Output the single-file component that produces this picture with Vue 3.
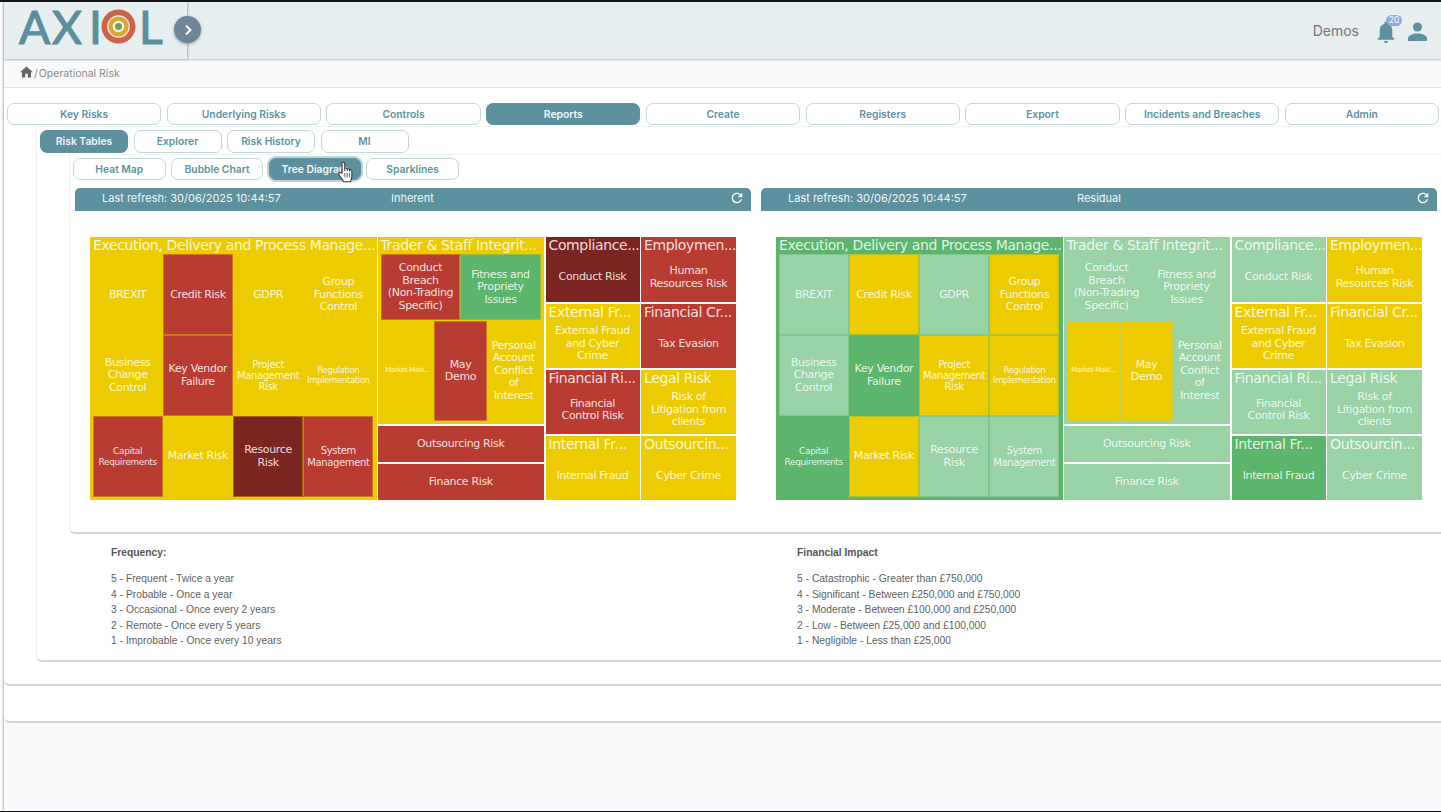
<script setup>
const mainTabs = ['Key Risks', 'Underlying Risks', 'Controls', 'Reports', 'Create', 'Registers', 'Export', 'Incidents and Breaches', 'Admin']
const subTabs = ['Risk Tables', 'Explorer', 'Risk History', 'MI']
const viewTabs = ['Heat Map', 'Bubble Chart', 'Tree Diagram', 'Sparklines']

const C = { r: '#b93c32', d: '#7b2521', y: '#eccc00', g: '#5cb56b', l: '#98d2a5' }

// x, y, w, h relative to the tree map; a = inherent colour, b = residual colour
const groups = [
  { t: 'Execution, Delivery and Process Manage...', x: 0, y: 0, w: 287, h: 263, a: 'y', b: 'g' },
  { t: 'Trader & Staff Integrit...', x: 287.5, y: 0, w: 166.5, h: 187, a: 'y', b: 'l' },
  { t: '', x: 287.5, y: 188.5, w: 166.5, h: 36, a: 'r', b: 'l', leaf: 'Outsourcing Risk' },
  { t: '', x: 287.5, y: 226.5, w: 166.5, h: 36.5, a: 'r', b: 'l', leaf: 'Finance Risk' },
  { t: 'Compliance...', x: 455.5, y: 0, w: 94, h: 65, a: 'd', b: 'l', leaf: 'Conduct Risk' },
  { t: 'Employmen...', x: 551, y: 0, w: 95, h: 65, a: 'r', b: 'y', leaf: 'Human\nResources Risk' },
  { t: 'External Fr...', x: 455.5, y: 66.5, w: 94, h: 64.5, a: 'y', b: 'y', leaf: 'External Fraud\nand Cyber\nCrime' },
  { t: 'Financial Cr...', x: 551, y: 66.5, w: 95, h: 64.5, a: 'r', b: 'y', leaf: 'Tax Evasion' },
  { t: 'Financial Ri...', x: 455.5, y: 132.5, w: 94, h: 64.5, a: 'r', b: 'l', leaf: 'Financial\nControl Risk' },
  { t: 'Legal Risk', x: 551, y: 132.5, w: 95, h: 64.5, a: 'y', b: 'l', leaf: 'Risk of\nLitigation from\nclients' },
  { t: 'Internal Fr...', x: 455.5, y: 198.5, w: 94, h: 64.5, a: 'y', b: 'g', leaf: 'Internal Fraud' },
  { t: 'Outsourcin...', x: 551, y: 198.5, w: 95, h: 64.5, a: 'y', b: 'l', leaf: 'Cyber Crime' }
]

const cols = [2.5, 72.8, 143, 213.2, 283.5]
const rows = [17.3, 98.3, 179, 260.3]
const cell = (c, r, label, a, b, fs = 11) => ({
  label, a, b, fs, pa: 'y', pb: 'g',
  x: cols[c], y: rows[r], w: cols[c + 1] - cols[c], h: rows[r + 1] - rows[r]
})
const leaves = [
  cell(0, 0, 'BREXIT', 'y', 'l'),
  cell(1, 0, 'Credit Risk', 'r', 'y'),
  cell(2, 0, 'GDPR', 'y', 'l'),
  cell(3, 0, 'Group\nFunctions\nControl', 'y', 'y'),
  cell(0, 1, 'Business\nChange\nControl', 'y', 'l'),
  cell(1, 1, 'Key Vendor\nFailure', 'r', 'g'),
  cell(2, 1, 'Project\nManagement\nRisk', 'y', 'y', 10),
  cell(3, 1, 'Regulation\nImplementation', 'y', 'y', 8.5),
  cell(0, 2, 'Capital\nRequirements', 'r', 'g', 9),
  cell(1, 2, 'Market Risk', 'y', 'y'),
  cell(2, 2, 'Resource\nRisk', 'd', 'l'),
  cell(3, 2, 'System\nManagement', 'r', 'l', 10),
  { label: 'Conduct\nBreach\n(Non-Trading\nSpecific)', x: 290.7, y: 17.3, w: 79.6, h: 66, a: 'r', b: 'l', fs: 11, pa: 'y', pb: 'l' },
  { label: 'Fitness and\nPropriety\nIssues', x: 370.3, y: 17.3, w: 80.4, h: 66, a: 'g', b: 'l', fs: 11, pa: 'y', pb: 'l' },
  { label: 'Market-Maki...', x: 290.7, y: 84, w: 53.6, h: 100, a: 'y', b: 'y', fs: 7, pa: 'y', pb: 'l' },
  { label: 'May\nDemo', x: 344.3, y: 84, w: 52.4, h: 100, a: 'r', b: 'y', fs: 11, pa: 'y', pb: 'l' },
  { label: 'Personal\nAccount\nConflict\nof\nInterest', x: 396.7, y: 84, w: 54, h: 100, a: 'y', b: 'l', fs: 11, pa: 'y', pb: 'l' }
]

const panels = [
  { name: 'Inherent', key: 'a', parent: 'pa' },
  { name: 'Residual', key: 'b', parent: 'pb' }
]
const box = (n) => ({ left: n.x + 'px', top: n.y + 'px', width: n.w + 'px', height: n.h + 'px' })
const nodeStyle = (n, p) => ({ ...box(n), background: C[n[p.key]] })
const leafStyle = (n, p) => ({
  ...box(n),
  background: C[n[p.key]],
  fontSize: n.fs + 'px',
  lineHeight: n.fs * 1.13 + 'px',
  boxShadow: `inset 0 0 0 1px ${C[n[p.parent]]}66`
})

const frequency = [
  '5 - Frequent - Twice a year',
  '4 - Probable - Once a year',
  '3 - Occasional - Once every 2 years',
  '2 - Remote - Once every 5 years',
  '1 - Improbable - Once every 10 years'
]
const impact = [
  '5 - Catastrophic - Greater than £750,000',
  '4 - Significant - Between £250,000 and £750,000',
  '3 - Moderate - Between £100,000 and £250,000',
  '2 - Low - Between £25,000 and £100,000',
  '1 - Negligible - Less than £25,000'
]
</script>

<template>
  <div class="page">
    <div class="shell">
      <header class="topbar">
        <div class="brand">
          <div class="logo">
            <span class="l-a">A</span><span class="l-x">X</span><span class="l-i">I</span>
            <svg class="target" viewBox="0 0 36 36" width="35" height="35" aria-hidden="true">
              <circle cx="18" cy="18" r="17.500" fill="#cf6349" />
              <circle cx="18" cy="18" r="11.600" fill="#f1f1ea" />
              <circle cx="18" cy="18" r="10.400" fill="#d9a72f" />
              <circle cx="18" cy="18" r="6" fill="#f1f1ea" />
              <circle cx="18" cy="18" r="3.600" fill="#6f9f5e" />
            </svg>
            <span class="l-l">L</span>
          </div>
          <button class="toggle" aria-label="Expand">
            <svg viewBox="0 0 12 12" width="12" height="12"><path d="M4 1.600 8.400 6 4 10.400" fill="none" stroke="#fff" stroke-width="2" /></svg>
          </button>
        </div>
        <div class="user-tools">
          <span class="user-name">Demos</span>
          <span class="bell">
            <svg viewBox="3.500 2 17 21" width="18" height="22"><path fill="#5d919f" d="M12 23c1.100 0 2-.9 2-2h-4c0 1.100.9 2 2 2zm6-6v-6c0-3.070-1.630-5.640-4.500-6.320V4c0-.83-.67-1.500-1.500-1.500s-1.500.67-1.500 1.500v.68C7.640 5.360 6 7.920 6 11v6l-2 2v1h16v-1l-2-2z" /></svg>
            <span class="badge">20</span>
          </span>
          <svg class="user" viewBox="0 0 20 20" width="19" height="19"><circle cx="10" cy="5.200" r="4.800" fill="#5d919f" /><path fill="#5d919f" d="M0 20v-2.500c0-3.400 4.500-5.500 10-5.500s10 2.100 10 5.500V20z" /></svg>
        </div>
      </header>

      <nav class="crumb">
        <svg class="home" viewBox="2 3 20 17" width="13" height="12"><path fill="#666" d="M10 20v-6h4v6h5v-8h3L12 3 2 12h3v8z" /></svg>
        <span class="slash">/</span><span>Operational Risk</span>
      </nav>

      <main class="card-main">
        <div class="tabs main-tabs">
          <button v-for="t in mainTabs" :key="t" class="tab" :class="{ on: t === 'Reports' }">{{ t }}</button>
        </div>

        <section class="card-sub">
          <div class="tabs sub-tabs">
            <button v-for="t in subTabs" :key="t" class="tab" :class="{ on: t === 'Risk Tables' }">{{ t }}</button>
          </div>

          <section class="card-view">
            <div class="tabs view-tabs">
              <button v-for="t in viewTabs" :key="t" class="tab" :class="{ on: t === 'Tree Diagram', focus: t === 'Tree Diagram' }">{{ t }}</button>
              <svg class="hand" viewBox="0 0 16 20" width="18" height="22.500" aria-hidden="true">
                <path fill="#fff" stroke="#333" stroke-width=".9" stroke-linejoin="round" d="M4.500 10.500V2.300c0-1.600 2.400-1.600 2.400 0V8.500V7.200c0-1.400 2.200-1.400 2.200 0v1.500-.8c0-1.300 2.100-1.300 2.100 0v1.200-.4c0-1.200 2-1.200 2 0v4.800c0 2-.9 3.200-1.300 4.900H5.800c-.6-1.700-2-3-3.400-5.200-1-1.600-1.300-2.300-.8-2.800.6-.6 1.500-.2 2 .5z" />
                <path stroke="#333" stroke-width=".7" d="M7 10.500v4M9.100 10.500v4M11.200 10.500v4" />
              </svg>
            </div>

            <div class="panels">
              <article v-for="p in panels" :key="p.name" class="panel">
                <div class="panel-head">
                  <span class="refresh-time">Last refresh: 30/06/2025 10:44:57</span>
                  <span class="panel-name">{{ p.name }}</span>
                  <svg class="refresh" viewBox="3 3 18 18" width="12" height="12"><path fill="#fff" d="M17.650 6.350C16.200 4.900 14.210 4 12 4c-4.420 0-7.990 3.580-7.990 8s3.570 8 7.990 8c3.730 0 6.840-2.550 7.730-6h-2.080c-.82 2.330-3.040 4-5.650 4-3.310 0-6-2.690-6-6s2.690-6 6-6c1.660 0 3.140.69 4.220 1.780L13 11h7V4l-2.350 2.350z" /></svg>
                </div>
                <div class="treemap">
                  <div v-for="g in groups" :key="g.t + g.y + g.x" class="group" :style="nodeStyle(g, p)">
                    <div v-if="g.t" class="g-title">{{ g.t }}</div>
                    <div v-if="g.leaf" class="g-leaf" :class="{ full: !g.t }">{{ g.leaf }}</div>
                  </div>
                  <div v-for="n in leaves" :key="n.label" class="leaf" :style="leafStyle(n, p)">{{ n.label }}</div>
                </div>
              </article>
            </div>
          </section>

          <div class="legend">
            <div>
              <h4>Frequency:</h4>
              <p v-for="l in frequency" :key="l">{{ l }}</p>
            </div>
            <div>
              <h4>Financial Impact</h4>
              <p v-for="l in impact" :key="l">{{ l }}</p>
            </div>
          </div>
        </section>
      </main>

      <div class="card-foot"></div>
    </div>
  </div>
</template>

<style>
html, body { margin: 0; background: #fff; }
</style>

<style scoped>
.page {
  width: 1441px;
  height: 812px;
  box-sizing: border-box;
  overflow: hidden;
  display: flex;
  padding-left: 4px;
  border-top: 2px solid #14161a;
  border-bottom: 1px solid #14161a;
  background: #fdfdfd;
  font-family: Inter, "Liberation Sans", sans-serif;
}
.shell {
  flex: 1;
  min-width: 0;
  display: flex;
  flex-direction: column;
  background: #f8f9fb;
  box-shadow: -1px 0 2px rgba(0, 0, 0, .28);
}
.topbar {
  height: 57px;
  flex: none;
  display: flex;
  justify-content: space-between;
  align-items: center;
  background: #e6eef0;
  box-shadow: 0 1px 2px #bbb;
  position: relative;
  z-index: 2;
}
.brand {
  width: 183px;
  height: 100%;
  position: relative;
  box-shadow: 1px 0 2px #a9b0b2;
}
.logo {
  display: flex;
  align-items: center;
  box-sizing: border-box;
  height: 100%;
  padding: 0 0 8px 15px;
  color: #5b8f9e;
  font: 400 46px/1.200 Lato, sans-serif;
  -webkit-text-stroke: 1.200px #5b8f9e;
}
.logo span { display: block; flex: none; }
.l-a { width: 31px; }
.l-x { width: 29px; margin-left: 2px; }
.l-i { width: 8px; margin-left: 8px; }
.target { margin-left: 4px; flex: none; }
.l-l { width: 20px; margin-left: 3px; }
.toggle {
  position: absolute;
  right: -14px;
  top: 14px;
  width: 27px;
  height: 27px;
  padding: 0;
  border: 0;
  border-radius: 50%;
  background: #6e8798;
  box-shadow: 0 1px 3px rgba(0, 0, 0, .35);
  display: flex;
  align-items: center;
  justify-content: center;
}
.user-tools {
  display: flex;
  align-items: center;
  padding-right: 14px;
  color: #777;
  font-size: 14px;
}
.user-name { margin-right: 18px; }
.bell { position: relative; display: flex; margin: 2px 13px 0 0; }
.user { margin-top: 1px; }
.badge {
  position: absolute;
  left: 9px;
  top: -6px;
  width: 16px;
  height: 11px;
  border-radius: 6px;
  background: #8ea9dd;
  color: #fff;
  font-size: 8.500px;
  line-height: 11px;
  text-align: center;
}
.crumb {
  height: 28px;
  flex: none;
  display: flex;
  align-items: center;
  padding-left: 16px;
  background: #f9fafb;
  border-bottom: 1px solid #e2e4e5;
  color: #8a8a8a;
  font-size: 10.500px;
}
.home { margin-bottom: 2px; }
.slash { margin: 0 1px; }
.card-main {
  flex: none;
  height: 598px;
  box-sizing: border-box;
  padding: 15px 0 0 3px;
  background: #fff;
  border-bottom: 2px solid #cfd1d2;
  border-radius: 0 0 0 6px;
}
.tabs { display: flex; gap: 5px; }
.tab {
  box-sizing: border-box;
  padding: 0;
  border: 1px solid #c4d7da;
  border-radius: 7px;
  background: #fff;
  color: #6093a2;
  font: 600 10.300px/1 Inter, "Liberation Sans", sans-serif;
}
.tab.on { background: #5d919f; border-color: #5d919f; color: #f3f7f8; }
.tab.focus { box-shadow: 0 0 0 2px #bcd3d8; }
.main-tabs { display: grid; grid-template-columns: repeat(9, 1fr); gap: 5.500px; width: 1432px; height: 22px; }
.card-sub {
  margin: 1px 0 0 29px;
  box-sizing: border-box;
  height: 536px;
  padding: 3px 0 0 3px;
  border-left: 1px solid #eceded;
  border-top: 1px solid #f3f4f4;
  border-bottom: 2px solid #d4d6d7;
  border-radius: 0 0 0 6px;
}
.sub-tabs { height: 23px; gap: 5.500px; }
.sub-tabs .tab { width: 88px; }
.card-view {
  margin: 1px 0 0 29px;
  box-sizing: border-box;
  height: 380px;
  padding: 3px 0 0 3px;
  border-left: 1px solid #eceded;
  border-top: 1px solid #f3f4f4;
  border-bottom: 2px solid #d4d6d7;
  border-radius: 0 0 0 6px;
}
.view-tabs { height: 22px; position: relative; gap: 5.200px; }
.view-tabs .tab { width: 92.600px; }
.hand { position: absolute; left: 264px; top: 3px; }
.panels { display: flex; gap: 10.500px; margin: 8px 0 0 2px; }
.panel { width: 675.500px; flex: none; }
.panel-head {
  height: 23px;
  box-sizing: border-box;
  display: flex;
  align-items: center;
  padding: 0 8px 3px 27px;
  background: #5d919f;
  border-radius: 5px 5px 0 0;
  color: #f2f6f7;
  font-size: 11px;
}
.refresh-time { width: 289px; flex: none; }
.refresh { margin-left: auto; }
.treemap {
  position: relative;
  width: 646px;
  height: 263px;
  margin: 26px 0 0 15px;
  font-family: "DejaVu Sans", sans-serif;
}
.group { position: absolute; overflow: hidden; color: rgba(255, 255, 255, .86); }
.g-title {
  padding-left: 3px;
  font-size: 14px;
  letter-spacing: -.37px;
  line-height: 17px;
  white-space: nowrap;
}
.g-leaf {
  box-sizing: border-box;
  height: 46px;
  padding-top: 1px;
  display: flex;
  align-items: center;
  justify-content: center;
  text-align: center;
  font-size: 11px;
  letter-spacing: -.35px;
  line-height: 12.400px;
  white-space: pre-line;
}
.g-leaf.full { height: 100%; }
.leaf {
  position: absolute;
  box-sizing: border-box;
  display: flex;
  align-items: center;
  justify-content: center;
  text-align: center;
  letter-spacing: -.35px;
  white-space: pre-line;
  color: rgba(255, 255, 255, .86);
}
.legend {
  display: grid;
  grid-template-columns: 686px 1fr;
  padding: 11px 0 0 71px;
  color: #5f5f5f;
  font-family: "Liberation Sans", sans-serif;
  font-size: 10.300px;
  line-height: 15.400px;
}
.legend h4 { margin: 0 0 11px; font-size: 10.300px; color: #555; }
.legend p { margin: 0; }
.card-foot {
  height: 37px;
  flex: none;
  box-sizing: border-box;
  background: #fff;
  border-bottom: 2px solid #cfd1d2;
  border-radius: 0 0 0 6px;
}
</style>
